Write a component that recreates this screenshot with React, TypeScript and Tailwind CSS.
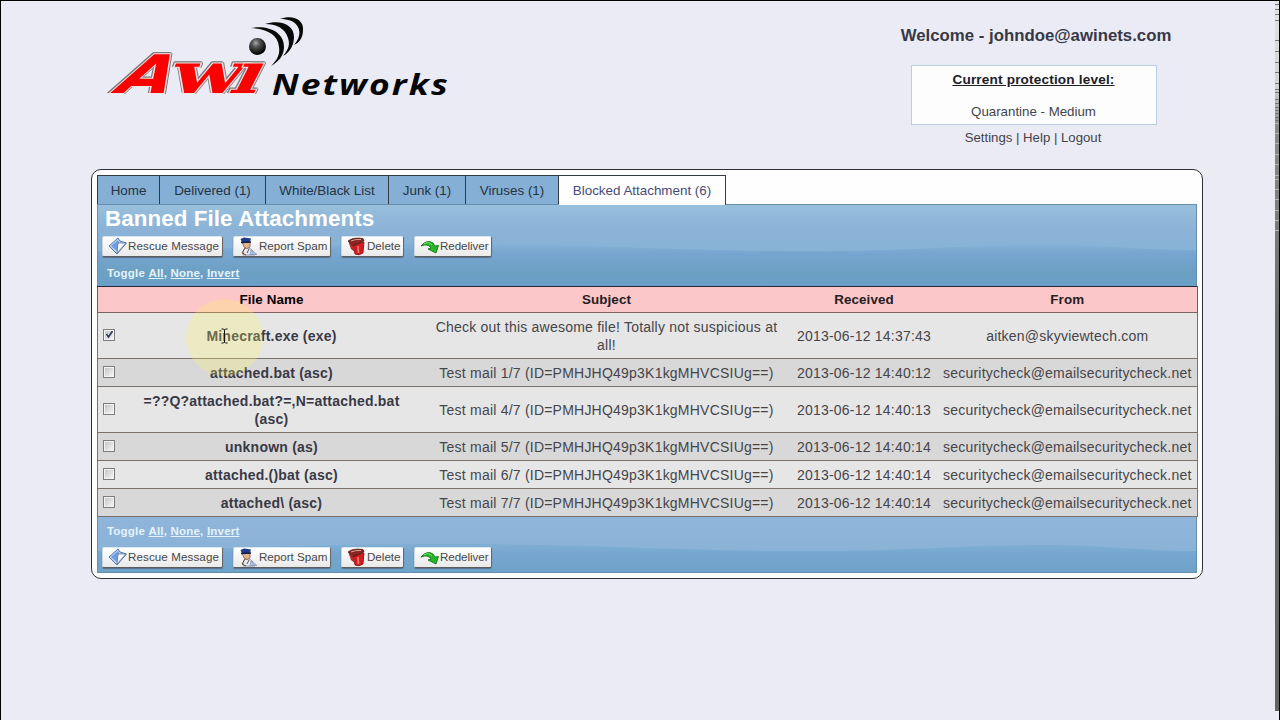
import { useState } from 'react'
import clsx from 'clsx'

const tabs = [
  { label: 'Home', width: 'w-[63px]' },
  { label: 'Delivered (1)', width: 'w-[106px]' },
  { label: 'White/Black List', width: 'w-[123px]' },
  { label: 'Junk (1)', width: 'w-[77px]' },
  { label: 'Viruses (1)', width: 'w-[93px]' },
  { label: 'Blocked Attachment (6)', width: 'w-[167px]' },
]

const rows = [
  { file: 'Minecraft.exe (exe)', subject: 'Check out this awesome file! Totally not suspicious at all!', received: '2013-06-12 14:37:43', from: 'aitken@skyviewtech.com', height: 'h-[46px]' },
  { file: 'attached.bat (asc)', subject: 'Test mail 1/7 (ID=PMHJHQ49p3K1kgMHVCSIUg==)', received: '2013-06-12 14:40:12', from: 'securitycheck@emailsecuritycheck.net', height: 'h-[28px]' },
  { file: '=??Q?attached.bat?=,N=attached.bat (asc)', subject: 'Test mail 4/7 (ID=PMHJHQ49p3K1kgMHVCSIUg==)', received: '2013-06-12 14:40:13', from: 'securitycheck@emailsecuritycheck.net', height: 'h-[46px]' },
  { file: 'unknown (as)', subject: 'Test mail 5/7 (ID=PMHJHQ49p3K1kgMHVCSIUg==)', received: '2013-06-12 14:40:14', from: 'securitycheck@emailsecuritycheck.net', height: 'h-[28px]' },
  { file: 'attached.()bat (asc)', subject: 'Test mail 6/7 (ID=PMHJHQ49p3K1kgMHVCSIUg==)', received: '2013-06-12 14:40:14', from: 'securitycheck@emailsecuritycheck.net', height: 'h-[28px]' },
  { file: 'attached\\ (asc)', subject: 'Test mail 7/7 (ID=PMHJHQ49p3K1kgMHVCSIUg==)', received: '2013-06-12 14:40:14', from: 'securitycheck@emailsecuritycheck.net', height: 'h-[28px]' },
]

function Logo() {
  return (
    <svg width="360" height="110" viewBox="0 0 360 110" className="block overflow-visible">
      <defs>
        <radialGradient id="ball" cx="0.4" cy="0.3" r="0.65">
          <stop offset="0" stopColor="#aaa" />
          <stop offset="0.35" stopColor="#555" />
          <stop offset="1" stopColor="#050505" />
        </radialGradient>
      </defs>
      <g
        className="[filter:drop-shadow(-1px_-1px_0_#777)_drop-shadow(1px_0_0_#777)]"
        fill="#fb0000"
        stroke="#f6e2e4"
        strokeWidth="2"
        paintOrder="stroke"
        fontWeight="700"
      >
        <text transform="translate(10 81.500) skewX(-33)" fontFamily="'DejaVu Sans', sans-serif" fontSize="53" textLength="54" lengthAdjust="spacingAndGlyphs">A</text>
        <text transform="translate(67 81.500) skewX(-18)" fontFamily="'DejaVu Serif', serif" fontSize="57" textLength="72" lengthAdjust="spacingAndGlyphs">w</text>
        <text transform="translate(127 81.500) skewX(-27)" fontFamily="'DejaVu Serif', serif" fontSize="57" textLength="29" lengthAdjust="spacingAndGlyphs">ı</text>
      </g>
      <circle cx="157.500" cy="35.500" r="8.500" fill="url(#ball)" />
      <g fill="#080808">
        <path d="M151 17C170 14 184 22 184 36C184 45 178 51 171 55C178 48 180 43 179 36C178 24 168 18 151 17Z" />
        <path d="M165 13C181 8 194 14 194 26C194 35 189 42 183 45C189 38 190 33 188 27C185 17 176 13 165 13Z" />
        <path d="M180 8C193 3 204 9 203 19C203 27 199 32 194 34C199 28 201 22 198 16C195 10 188 8 180 8Z" />
      </g>
      <text
        transform="translate(172 84) scale(1.220 1)"
        fontFamily="'Open Sans', sans-serif"
        fontSize="29"
        fontStyle="italic"
        fontWeight="700"
        textLength="144"
        lengthAdjust="spacing"
        fill="#060606"
      >
        Networks
      </text>
    </svg>
  )
}

function RescueIcon() {
  return (
    <svg width="20" height="19" viewBox="0 0 20 19">
      <path d="M1 9L10 1L12 4L18.500 6L9 17Z" fill="#b8d4f5" stroke="#5577a8" />
      <path d="M3 9L10 3L12 8L9 14Z" fill="#6f9be5" />
      <path d="M10 6L18 6L9 16Z" fill="#f6faff" stroke="#64738c" strokeWidth="0.8" />
    </svg>
  )
}

function OfficerIcon() {
  return (
    <svg width="19" height="19" viewBox="0 0 19 19">
      <path d="M5 12Q10 9 14 14L16 18H4Z" fill="#e8ecf4" stroke="#7a86a0" strokeWidth="0.8" />
      <path d="M3 5H11V10Q8 13 5 10Z" fill="#e2b58a" stroke="#70503a" strokeWidth="0.7" />
      <path d="M1.500 2L5 .5L12 1.500L11 5L3 5.500Z" fill="#203a85" />
      <path d="M2 5.500L12 5" stroke="#101c4a" strokeWidth="1.400" />
      <path d="M6 11L3 16L7 18M10 12L8 16" stroke="#654a3a" fill="none" />
      <path d="M12 13L18 17.500H11Z" fill="#a9c2ea" stroke="#7689ad" strokeWidth="0.6" />
    </svg>
  )
}

function TrashIcon() {
  return (
    <svg width="19" height="19" viewBox="0 0 19 19">
      <path d="M6 8L17 5L16 16Q12 19 8 17Z" fill="#d31c20" stroke="#7e0d10" strokeWidth="0.8" />
      <path d="M11 9L11.500 16" stroke="#f47b74" strokeWidth="1.600" />
      <path d="M1 4Q6 0 16 1.500L17 4L6 9Z" fill="#8a2420" stroke="#501816" strokeWidth="0.8" />
      <path d="M4 4Q8 2 14 2.500" stroke="#d7a69a" fill="none" />
      <path d="M1.500 5L6 9L9 16L4 12Z" fill="#b42b26" />
    </svg>
  )
}

function RedeliverIcon() {
  return (
    <svg width="20" height="19" viewBox="0 0 20 19">
      <path d="M1 9Q7 2 13 6L15 9L18.500 8.500L16 16L8 12L11 11Q8 6 1 9Z" fill="#25b727" stroke="#157719" strokeWidth="0.9" />
      <path d="M4 7Q9 4 12 8" stroke="#86e278" fill="none" />
    </svg>
  )
}

const actions = [
  { label: 'Rescue Message', Icon: RescueIcon, width: 'w-[121px]', text: 'tracking-[0.1px]' },
  { label: 'Report Spam', Icon: OfficerIcon, width: 'w-[98px]', text: 'tracking-[0px]' },
  { label: 'Delete', Icon: TrashIcon, width: 'w-[63px]', text: 'tracking-[0px]' },
  { label: 'Redeliver', Icon: RedeliverIcon, width: 'w-[78px]', text: 'tracking-[-0.05px]' },
]

function Actions() {
  return (
    <div className="flex gap-[10px] pl-[4px]">
      {actions.map(({ label, Icon, width, text }) => (
        <button
          key={label}
          className={clsx(
            'flex h-[21px] items-center whitespace-nowrap rounded-[2px] border border-t-[#dce6ee] border-r-[#686868] border-b-[#5c5c5c] border-l-[#cbd6df] bg-linear-to-b from-white to-[#e9e9e9] pb-px pl-[5px] text-[11.600px] text-[#484848] shadow-[0_1px_1px_#58718b]',
            width,
            text
          )}
        >
          <span className="w-5 shrink-0"><Icon /></span>
          {label}
        </button>
      ))}
    </div>
  )
}

function Toggle({ onAll, onNone, onInvert }: { onAll: () => void; onNone: () => void; onInvert: () => void }) {
  return (
    <div className="pl-[9px] text-[11.500px] leading-[14px] font-bold tracking-[0.2px] text-[#e6f2fa]">
      Toggle <button className="underline" onClick={onAll}>All</button>,{' '}
      <button className="underline" onClick={onNone}>None</button>,{' '}
      <button className="underline" onClick={onInvert}>Invert</button>
    </div>
  )
}

function Checkbox({ checked, onChange }: { checked: boolean; onChange: () => void }) {
  return (
    <button
      role="checkbox"
      aria-checked={checked}
      onClick={onChange}
      className="flex h-3 w-3 items-center justify-center border border-[#7c7c7c] bg-linear-to-br from-[#bfc1c4] to-[#fafafa] outline-1 -outline-offset-2 outline-[#f3f3f3]"
    >
      {checked && (
        <svg width="9" height="9" viewBox="0 0 9 9" className="shrink-0">
          <path d="M1.500 4L3.500 7L7.500 1" stroke="#333b5e" strokeWidth="1.700" fill="none" />
        </svg>
      )}
    </button>
  )
}

const darkTicks = [3, 8, 13, 19, 39, 50, 61, 71, 82, 88, 91, 98, 102, 106, 109, 112, 116, 119]
const lightTicks = [122, 132, 142, 153, 163, 174, 178, 188, 198, 209, 219, 229]

function EdgeStrip() {
  return (
    <svg width="4" height="710" viewBox="0 0 4 710" className="block">
      <defs>
        <linearGradient id="edge" x1="0" y1="0" x2="0" y2="1">
          <stop offset="0" stopColor="#e3e3e4" />
          <stop offset="0.12" stopColor="#d2d2d3" />
          <stop offset="0.175" stopColor="#8a8a8b" />
          <stop offset="0.3" stopColor="#7d7d7e" />
          <stop offset="0.45" stopColor="#6a6a6b" />
          <stop offset="1" stopColor="#636364" />
        </linearGradient>
      </defs>
      <rect width="4" height="710" fill="url(#edge)" />
      {darkTicks.map((y) => <rect key={y} y={y} width="4" height="1" fill="#77777a" />)}
      {lightTicks.map((y) => <rect key={y} y={y} width="4" height="1" fill="#b5b5b6" />)}
    </svg>
  )
}

export default function App() {
  const [active, setActive] = useState(5)
  const [checked, setChecked] = useState([true, false, false, false, false, false])

  const toggles = {
    onAll: () => setChecked(checked.map(() => true)),
    onNone: () => setChecked(checked.map(() => false)),
    onInvert: () => setChecked(checked.map((c) => !c)),
  }

  return (
    <div className="flex h-[720px] w-[1280px] overflow-hidden border-t border-l border-black bg-[#ebebf5] font-['Liberation_Sans',Arial,sans-serif]">
      <div className="flex-1 pl-[90px]">
        <header className="flex h-[168px] w-[1112px] justify-between">
          <div className="pt-[10px] pl-[9px]"><Logo /></div>
          <div className="mr-[31px] flex w-[272px] flex-col items-center text-[#444449]">
            <div className="mt-[25px] text-[16.800px] leading-[20px] font-bold whitespace-nowrap text-[#383845]">
              Welcome - johndoe@awinets.com
            </div>
            <div className="mt-[19px] mr-[5px] h-[60px] w-[246px] border border-[#b9cede] bg-[#fdfdfe] pt-[6px] text-center text-[13.300px] leading-4">
              <div className="text-[13.600px] font-bold tracking-[0.17px] text-[#202024] underline">Current protection level:</div>
              <div className="mt-4">Quarantine - Medium</div>
            </div>
            <div className="mt-[5px] mr-[6px] text-[13.200px] leading-4">Settings | Help | Logout</div>
          </div>
        </header>

        <main className="h-[410px] w-[1112px] rounded-[10px] border border-[#303034] bg-[#fefefe] px-[5px] pt-[5px]">
          <nav className="relative z-10 flex h-[29px]">
            {tabs.map((tab, i) => (
              <button
                key={tab.label}
                onClick={() => setActive(i)}
                className={clsx(
                  'border-t border-r border-[#343a42] pt-[2px] text-[13.400px] whitespace-nowrap',
                  i === 0 && 'border-l',
                  active === i ? '-mb-px bg-[#fefefe] text-[#464c78]' : 'bg-[#85afd5] text-[#263341]',
                  tab.width
                )}
              >
                {tab.label}
              </button>
            ))}
          </nav>

          <section className="relative h-[82px] border border-b-0 border-[#648eae] bg-linear-to-b from-[#98bfdb] via-[#8cb2d7] via-30% to-[#86b3d6] to-55%">
            <svg className="absolute inset-0" width="1098" height="81" viewBox="0 0 1098 81">
              <defs>
                <linearGradient id="wave" x1="0" y1="38" x2="0" y2="81" gradientUnits="userSpaceOnUse">
                  <stop offset="0" stopColor="#84b2d5" />
                  <stop offset="0.25" stopColor="#77a5d0" />
                  <stop offset="0.7" stopColor="#6ca0c3" />
                  <stop offset="1" stopColor="#6a9fc9" />
                </linearGradient>
              </defs>
              <path d="M0 46C100 46 180 39 350 39C500 39 580 46 710 46C820 46 860 40 950 40C1010 40 1040 45 1098 45V81H0Z" fill="url(#wave)" />
            </svg>
            <div className="relative pt-[1px]">
              <h1 className="pl-[7px] text-[22.400px] leading-[26px] font-bold tracking-[0.06px] text-white">Banned File Attachments</h1>
              <div className="mt-[4px]"><Actions /></div>
              <div className="mt-[9px]"><Toggle {...toggles} /></div>
            </div>
          </section>

          <table className="w-[1100px] table-fixed border-collapse text-center text-[14px] leading-[18px] tracking-[0.22px]">
            <colgroup>
              <col className="w-[24px]" />
              <col className="w-[300px]" />
              <col className="w-[370px]" />
              <col className="w-[145px]" />
              <col className="w-[261px]" />
            </colgroup>
            <thead>
              <tr className="h-[26px] border border-t-[#262a35] border-x-[#6b5b5b] border-b-[#7c6262] bg-[#fbc7c8] text-[13.400px] tracking-[0.1px] text-[#262024]">
                <th />
                <th className="pt-px text-black">File Name</th>
                <th className="pt-px">Subject</th>
                <th className="pt-px">Received</th>
                <th className="pt-px pl-px">From</th>
              </tr>
            </thead>
            <tbody>
              {rows.map((row, i) => (
                <tr
                  key={row.file}
                  className={clsx('border border-[#7b716b] text-[#45454a]', row.height, i % 2 ? 'bg-[#d8d8d8]' : 'bg-[#e6e6e6]')}
                >
                  <td>
                    <div className="flex justify-center pr-px pb-[2px]">
                      <Checkbox
                        checked={checked[i]}
                        onChange={() => setChecked(checked.map((c, j) => (j === i ? !c : c)))}
                      />
                    </div>
                  </td>
                  <td className={clsx('px-4 font-bold text-[#393946]', i > 0 && 'pt-px')}>
                    {i === 0 ? (
                      <span className="relative">
                        {row.file}
                        <span className="absolute -top-[29px] -left-[20px] h-[77px] w-[77px] rounded-full bg-[#fff85c]/25" />
                        <svg className="absolute top-0 left-[14px]" width="9" height="16" viewBox="0 0 9 16">
                          <path d="M1.500 1H3.500L4.500 2L5.500 1H7.500M4.500 2V14M1.500 15H3.500L4.500 14L5.500 15H7.500" stroke="#111" fill="none" />
                        </svg>
                      </span>
                    ) : (
                      row.file
                    )}
                  </td>
                  <td className={clsx('px-3', i !== 2 && 'pt-px')}>{row.subject}</td>
                  <td className={clsx('whitespace-nowrap', i !== 0 && i !== 2 && 'pt-px')}>{row.received}</td>
                  <td className={clsx('pl-px whitespace-nowrap', i !== 0 && i !== 2 && 'pt-px')}>{row.from}</td>
                </tr>
              ))}
            </tbody>
          </table>

          <footer className="relative h-[56px] border-x border-b border-[#648eae] bg-linear-to-b from-[#90b5da] to-[#86b1d5]">
            <svg className="absolute inset-0" width="1098" height="55" viewBox="0 0 1098 55">
              <defs>
                <linearGradient id="footWave" x1="0" y1="25" x2="0" y2="55" gradientUnits="userSpaceOnUse">
                  <stop offset="0" stopColor="#82b0d5" />
                  <stop offset="0.4" stopColor="#76a6d0" />
                  <stop offset="1" stopColor="#6fa3c8" />
                </linearGradient>
              </defs>
              <path d="M0 34C100 34 180 27 350 27C500 27 580 34 710 34C820 34 860 28 950 28C1010 28 1040 34 1098 34V55H0Z" fill="url(#footWave)" />
            </svg>
            <div className="relative pt-[7px]">
              <Toggle {...toggles} />
              <div className="mt-[9px]"><Actions /></div>
            </div>
          </footer>
        </main>
      </div>
      <EdgeStrip />
      <div className="w-px bg-black" />
    </div>
  )
}
